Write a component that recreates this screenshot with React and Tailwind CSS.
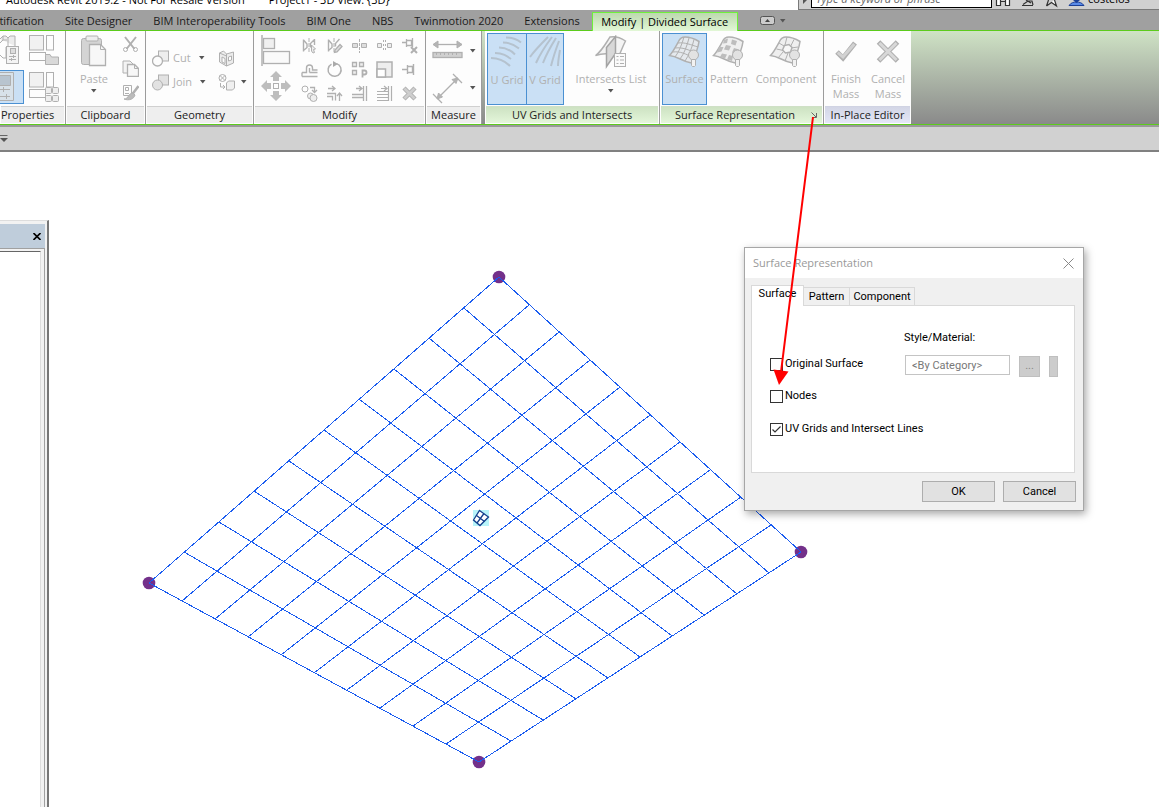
import React from "react";

const Caret = ({ className = "" }) => (
  <svg width="6" height="4" viewBox="0 0 6 4" className={className} aria-hidden="true">
    <path d="M0 0h5.500L2.750 3.500z" fill="#555" />
  </svg>
);

const Glyph = ({ w = 17, h = 17, children, className = "" }) => (
  <svg
    width={w}
    height={h}
    viewBox={`0 0 ${w} ${h}`}
    fill="none"
    stroke="#b0b0b0"
    strokeWidth="1"
    className={`shrink-0 ${className}`}
    aria-hidden="true"
  >
    {children}
  </svg>
);

const Tool = ({ label, className = "", children }) => (
  <button type="button" aria-label={label} className={`flex items-center justify-center ${className}`}>
    {children}
  </button>
);

const labelTones = {
  plain: "bg-[#eeeeee] border-[#d0d0d0]",
  green: "bg-linear-to-b from-[#cde2c2] to-[#e4f6da] border-[#cfe0c6]",
  blue: "bg-linear-to-b from-[#d3d6e6] to-[#e4e7f7] border-[#d0d3e3]",
};

function Panel({ title, width, tone = "plain", launcher, last, align = "justify-center", children }) {
  return (
    <section className={`flex shrink-0 flex-col bg-[#fdfdfd] ${width} ${last ? "" : "border-r border-[#9c9c9c]"}`}>
      <div className="flex h-[75px]">{children}</div>
      <div className={`mx-px flex h-[17px] items-center border-t text-[#222] ${align} ${labelTones[tone]}`}>
        <span className="whitespace-nowrap">{title}</span>
        {launcher && (
          <button type="button" aria-label={`${title} options`} className="ml-4">
            <svg width="7" height="7" viewBox="0 0 7 7" stroke="#666" fill="none" aria-hidden="true">
              <path d="M0.500 0.500L5 5M5.500 1v4.500H1" />
            </svg>
          </button>
        )}
      </div>
    </section>
  );
}

const PageCard = ({ x, y }) => (
  <g transform={`translate(${x} ${y})`}>
    <rect x="0.5" y="0.5" width="12" height="17" fill="#f4f4f4" />
    <rect x="4.500" y="2.500" width="5" height="5" fill="#ddd" />
    <path d="M3 10.500h7M3 13.500h7M7.500 9v3M5.500 12v3" />
  </g>
);

const SurfacePatch = ({ kind }) => (
  <Glyph w={34} h={34}>
    <path
      d="M1.500 20.500C5 17 8 11 10.500 6.500C12 3 14 2 17 2C22 2 27 4 31 6.500C30 14 27 21 23.500 28C18 27 15 25.500 11 23.500C8 22 5 21 1.500 20.500z"
      fill="#ebebeb"
      fillOpacity="0.8"
      strokeWidth="1.500"
    />
    {kind === "surface" && (
      <path d="M16 2C14 9 11 17 7 22M21 3C19 11 16 19 12 24M26 4.500C24 13 21 20 17 26M10 8C17 7 23 10 30 12M7.500 13C14 12 21 15 28 18M5 17C12 16 18 19 26 23" />
    )}
    {kind === "pattern" && (
      <g fill="#bdbdbd" stroke="none">
        <path d="M12 5l4-1.500-1 4.500-4 0.500zM20 4.500l5 1.500-1.500 4.500-4.500-1.500zM14 10l5 1-2 4.500-5-1zM22 13l5 1.500-2 4.500-5-1.500zM7 12l4.500 0-2 4.500-4.500 1zM10 18.500l5 1-2 4-5-1.500zM17 20l4 1-1 5-5-1.500z" />
      </g>
    )}
    {kind === "component" && (
      <>
        <path d="M18 2l-2 8M25 4.500l-4 8M10 8l5 3M29 12l-7 1M7.500 14l7 1.500M27 19l-7-2M14 17l-5 6M19 18l-3 8" />
        <path d="M15.500 10.500l4.500-1 3 3-1.500 4.500-5 1-3-3z" fill="#f8f8f8" strokeWidth="1.500" />
      </>
    )}
    <circle cx="25.500" cy="20" r="5" fill="#e2e2e2" />
    <path d="M23.500 24.500h4v6l-1 1h-2l-1-1z" fill="#f2f2f2" />
  </Glyph>
);

const IntersectIcon = () => (
  <Glyph w={34} h={34}>
    <path d="M1.500 20.500C8 16 12 8 16 2C21 1 27 3 31.500 6C29 11 27 16 24.500 22C17 18 9 18 1.500 20.500z" fill="#f4f4f4" strokeWidth="1.500" />
    <path d="M12.500 12.500L21.500 1.500V18.500L12.500 31.500z" fill="#d8d8d8" strokeWidth="1.500" stroke="#a4a4a4" />
    <rect x="20.500" y="18.500" width="11" height="13" fill="#fafafa" />
    <path d="M22.500 21.500h2M26 21.500h4M22.500 25h2M26 25h4M22.500 28.500h2M26 28.500h4" />
  </Glyph>
);

const Pane = ({ folder }) => (
  <Glyph w={31} h={31}>
    <rect x="0.5" y="0.5" width="14" height="14.500" fill="#f1f1f1" />
    <rect x="17.500" y="0.5" width="7" height="14.500" fill="#fdfdfd" />
    <rect x="0.5" y="17.500" width="16" height="8" fill="#fdfdfd" />
    {folder ? (
      <path d="M16.500 20.500v9h13v-7.500h-7l-1.500-2.500h-4.500z" fill="#d9d9d9" />
    ) : (
      <>
        <rect x="16.500" y="15.500" width="6" height="6" rx="1" fill="#eee" />
        <rect x="23.500" y="15.500" width="6" height="6" rx="1" fill="#eee" />
        <rect x="16.500" y="23.500" width="6" height="6" rx="1" fill="#eee" />
        <rect x="23.500" y="23.500" width="6" height="6" rx="1" fill="#eee" />
      </>
    )}
  </Glyph>
);

const modifyTools = [
  ["Mirror - Pick Axis", <><path d="M2.500 2.500v12M2.500 3l3.500 4v3.500l-3.500 3M13.500 2v6M13.500 2.500l-4 4v4" strokeWidth="1.400" /><path d="M8 1v15" strokeDasharray="4 1" /><path d="M10.500 8l4 4-2 0.500 1 3-1.500 0.500-1.500-2z" fill="#eee" /></>],
  ["Mirror - Draw Axis", <><path d="M2.500 2.500v12M2.500 3l3.500 4v3.500l-3.500 3M13.500 2l-4 4.500v3" strokeWidth="1.400" /><path d="M8 1v15" strokeDasharray="4 1" /><path d="M14 7.500l2 2-5 5.500-2.500 0.500 0.500-2.500z" fill="#ddd" strokeWidth="1.300" /></>],
  ["Split Element", <><path d="M1.500 6.500h5v4h-5zM10.500 6.500h5v4h-5z" fill="#ddd" /><path d="M8.500 2v14" strokeDasharray="3 1" /></>],
  ["Split with Gap", <><path d="M1.500 6.500h4v4h-4zM11.500 6.500h4v4h-4z" fill="#eee" /><path d="M7.500 3v11M9.500 3v11" strokeDasharray="2 2" /></>],
  ["Unpin", <><path d="M1 5.500h4M5.500 2v8M5.500 3.500h5v5h-5M11.500 1v9" strokeWidth="1.300" /><path d="M10 10l6 6M16 10l-6 6" strokeWidth="2" /></>],
  ["Offset", <path d="M1 11.500h4.500V7a3 3 0 0 1 6 0v2h5M1 15.500h15.500M1 11.500v4M8.500 11.500h8M8.500 7v4.500" strokeWidth="1.400" />],
  ["Rotate", <><path d="M10.500 2.600a6.500 6.500 0 1 1 -5 0.500" strokeWidth="1.500" /><path d="M7 0l5 3-5 3z" fill="#aaa" stroke="none" /></>],
  ["Array", <><path d="M1.500 1.500h4v4h-4zM8.500 1.500h4v4h-4zM1.500 9.500h4v4h-4z" fill="#eee" strokeWidth="1.300" /><path d="M11.500 16.500V9.500h2a2 2 0 0 1 0 4h-2" strokeWidth="1.800" /></>],
  ["Scale", <><rect x="1" y="1" width="15" height="15" fill="#eee" strokeWidth="1.500" /><rect x="1" y="8" width="8.500" height="8" fill="#fff" strokeWidth="1.500" /></>],
  ["Pin", <path d="M1 8.500h5M6.500 4v9M6.500 5.500h5v6h-5M12.500 3v11" strokeWidth="1.400" />],
  ["Copy", <><circle cx="4" cy="4" r="3" /><path d="M9 2.500h4.500v4M11 5l2.500 2.500L16 5" strokeWidth="1.300" /><circle cx="9.500" cy="11" r="3" fill="#eee" /><circle cx="12.500" cy="13" r="3.500" fill="#eee" /></>],
  ["Trim to Corner", <path d="M2 3.500h7M6 1l3 2.500L6 6M1 8.500h8.500v7M1 11.500h5.500v4M13.500 16V9M11 11l2.500-3 2.500 3" strokeWidth="1.300" />],
  ["Trim Single", <path d="M5 3.500h6M8 1l3 2.500L8 6M12.500 1v15M15.500 1v15M1 9.500h11M1 12.500h11" strokeWidth="1.300" />],
  ["Trim Multiple", <path d="M5 3.500h6M8 1l3 2.500L8 6M12.500 1v15M15.500 1v15M1 6.500h11M1 9.500h11M1 12.500h11M1 15.500h11" strokeWidth="1.200" />],
  ["Delete", <><path d="M3 3l11 11M14 3L3 14" strokeWidth="4.500" /><path d="M3.500 3.500l10 10M13.500 3.500l-10 10" strokeWidth="2.500" stroke="#cecece" /></>],
];

const GridCurves = () => (
  <Glyph w={32} h={32}>
    <g stroke="#b5c2ce" strokeWidth="2">
      <path d="M15 1.500c6 0 11 2 15 5M12 6.500c7 0 11 2 16 6M8 11.500c8 0 12 3 16 7M4 17c8 0 12 3 16 6M0 22c8 0 14 3 19 8" />
    </g>
  </Glyph>
);

const GridRays = () => (
  <Glyph w={32} h={32}>
    <g stroke="#b5c2ce" strokeWidth="2">
      <path d="M19 1C13 7 6 14 1 21M23 1C17 9 11 18 7 27M27 2C22 10 17 19 14 27M30 5C27 13 24 22 22 30M31 14c-1 6-2 11-2 16" />
    </g>
  </Glyph>
);

const bigTool = "flex flex-col items-center pt-1 text-[#b0b0b0]";
const bigActive = "border border-[#4a90d2] bg-[#cae0f5]";

function Ribbon() {
  return (
    <div className="flex h-[94px] overflow-hidden border-b border-[#5ccb1c] bg-linear-to-b from-[#cfe3c5] to-[#8a8a8a] leading-4">
      <Panel title="Properties" width="w-[66px]" align="justify-start">
        <div className="flex flex-col">
          <Tool label="Type Properties" className="mt-0.5 h-9 w-6 justify-start!">
            <Glyph w={20} h={32}>
              <path d="M0 4l3-3h3l2 2 2-2h5v10M3 1v4L0 8M8 3v8M3 5h4" fill="#ececec" />
              <path d="M0 20l3 3h3V12" />
              <PageCard x={6} y={11} />
            </Glyph>
          </Tool>
          <Tool label="Properties" className="mt-px h-[34px] w-6 border border-l-0 border-[#4a90d2] bg-[#cae0f5] justify-start!">
            <Glyph w={16} h={30}>
              <path d="M0 0.500h13.500v28H0" fill="#d8e2ea" />
              <path d="M0 3.500h10.500v10H0" fill="#b8c4cf" />
              <path d="M0 17.500h10M3.500 15v5M0 24.500h10M6.500 22v5" />
            </Glyph>
          </Tool>
        </div>
        <div className="ml-[5px] flex flex-col gap-1.5 pt-1">
          <Tool label="Family Category"><Pane folder /></Tool>
          <Tool label="Family Types"><Pane /></Tool>
        </div>
      </Panel>
      <Panel title="Clipboard" width="w-20">
        <button type="button" className={`${bigTool} ml-2.5 w-9`}>
          <Glyph w={28} h={32}>
            <rect x="1.500" y="3.500" width="20" height="26" rx="2" fill="#d4d4d4" />
            <rect x="6" y="1" width="12" height="5" rx="1" fill="#eee" />
            <path d="M9.500 9.500h11l5 5v16h-16z" fill="#f7f7f7" strokeWidth="1.300" />
            <path d="M20.500 9.500v5h5" />
          </Glyph>
          <span className="mt-1">Paste</span>
          <Caret className="mt-0.5" />
        </button>
        <div className="ml-2.5 flex flex-col gap-[7px] pt-[5px]">
          <Tool label="Cut">
            <Glyph><path d="M3 1l9.500 12M14 1L4.500 13" strokeWidth="2" /><circle cx="3.500" cy="13.500" r="2" /><circle cx="13.500" cy="13.500" r="2" /></Glyph>
          </Tool>
          <Tool label="Copy">
            <Glyph><path d="M1 1h7l3 3v9H1z" fill="#f3f3f3" /><path d="M5.500 4.500h7l4 4v8h-11z" fill="#f7f7f7" strokeWidth="1.300" /><path d="M12.500 4.500v4h4" /></Glyph>
          </Tool>
          <Tool label="Match Type">
            <Glyph><path d="M1.500 1.500h8v10h-8zM3.500 3.500h3v3h-3zM3 9.500h4" /><path d="M16.500 2l-6 8" strokeWidth="2.500" /><path d="M11 9c-5 0-4 6-9 6 5 2 10 0 11-4z" fill="#bbb" /></Glyph>
          </Tool>
        </div>
      </Panel>
      <Panel title="Geometry" width="w-[108px]">
        <div className="ml-1.5 flex flex-col gap-2 pt-[19px] text-[#b0b0b0]">
          <button type="button" className="flex h-4 items-center">
            <Glyph><rect x="6.500" y="1" width="10" height="10" fill="#eee" /><circle cx="5.500" cy="11" r="5" fill="#fcfcfc" strokeWidth="1.300" /></Glyph>
            <span className="ml-1">Cut</span><Caret className="ml-2" />
          </button>
          <button type="button" className="flex h-4 items-center">
            <Glyph><rect x="6.500" y="1" width="10" height="10" fill="#e2e2e2" /><circle cx="5.500" cy="11" r="5" fill="#e2e2e2" /></Glyph>
            <span className="ml-1">Join</span><Caret className="ml-2" />
          </button>
        </div>
        <div className="ml-3 flex flex-col gap-2 pt-[19px]">
          <Tool label="Join Roof" className="h-4 justify-start!">
            <Glyph><path d="M1.500 3l4-2 3 3 7-2v11l-7 3-7-4zM8.500 4v12M1.500 3l7 3M4 7v5l3 1.500V8.500z" fill="#ececec" /><path d="M10.500 7l3-1v4l-3 1z" fill="#fff" /></Glyph>
          </Tool>
          <Tool label="Paint" className="h-4 justify-start!">
            <Glyph w={17}><circle cx="4.500" cy="4" r="3.500" /><path d="M2 1.500l5 5M7 1.500L2 6.500M2.500 9v4h4M5 11l2 2-2 2" /><path d="M8.500 9l2-2h6v7l-2 2h-6z" fill="#f0f0f0" /></Glyph>
            <Caret className="ml-1.5" />
          </Tool>
        </div>
      </Panel>
      <Panel title="Modify" width="w-[172px]">
        <div className="ml-[7px] flex flex-col gap-1 pt-1">
          <Tool label="Align">
            <Glyph w={30} h={32}>
              <path d="M1 0v31" strokeWidth="1.500" />
              <rect x="2.500" y="3.500" width="11" height="10" fill="#f0f0f0" strokeWidth="1.300" />
              <rect x="2.500" y="16.500" width="26" height="12" fill="#fafafa" strokeWidth="1.300" />
            </Glyph>
          </Tool>
          <Tool label="Move">
            <Glyph w={30} h={32}>
              <g fill="#bdbdbd" stroke="none">
                <path d="M15 0l6 6h-3v4h-6V6H9zM15 30l6-6h-3v-4h-6v4H9zM0 15l6-6v3h4v6H6v3zM30 15l-6-6v3h-4v6h4v3z" />
              </g>
              <rect x="12.500" y="12.500" width="5" height="5" />
            </Glyph>
          </Tool>
        </div>
        <div className="ml-2.5 grid grid-cols-5 content-start gap-x-2 gap-y-[7px] pt-1.5">
          {modifyTools.map(([label, art]) => (
            <Tool key={label} label={label}><Glyph>{art}</Glyph></Tool>
          ))}
        </div>
      </Panel>
      <Panel title="Measure" width="w-14">
        <div className="ml-1.5 flex flex-col gap-1 pt-1">
          <Tool label="Measure" className="h-8 gap-[7px]">
            <Glyph w={31} h={22}>
              <path d="M2 4.500h28" strokeWidth="1.300" /><path d="M6 1L1 4.500 6 8zM25 1l5 3.500L25 8z" fill="#b4b4b4" />
              <rect x="1" y="12.500" width="29" height="5" fill="#d0d0d0" strokeWidth="1.300" /><path d="M4.500 13v2M8.500 13v2M12.500 13v2M16.500 13v2M20.500 13v2M24.500 13v2" />
            </Glyph>
            <Caret />
          </Tool>
          <Tool label="Aligned Dimension" className="h-9 gap-[7px]">
            <Glyph w={31} h={31}><path d="M1 21l9 9M21 1l9 9M6 25L26 5" strokeWidth="1.300" /><path d="M5 26l1.500-6 4 4zM26 5l-6 1.500 4 4z" fill="#b4b4b4" /></Glyph>
            <Caret />
          </Tool>
        </div>
      </Panel>
      <div className="w-[3px] shrink-0" />
      <Panel title="UV Grids and Intersects" width="w-[175px]" tone="green">
        <button type="button" className={`${bigTool} ${bigActive} ml-[2px] mt-0.5 h-[72px] w-10 pt-0.5!`}>
          <GridCurves /><span className="mt-1 whitespace-nowrap">U Grid</span>
        </button>
        <button type="button" className={`${bigTool} ${bigActive} -ml-px mt-0.5 h-[72px] w-[38px] pt-0.5!`}>
          <GridRays /><span className="mt-1 whitespace-nowrap">V Grid</span>
        </button>
        <button type="button" className={`${bigTool} ml-2.5 w-[74px]`}>
          <IntersectIcon /><span className="mt-0.5 whitespace-nowrap">Intersects List</span><Caret className="mt-0.5" />
        </button>
      </Panel>
      <Panel title="Surface Representation" width="w-[164px]" tone="green" launcher align="justify-end pr-1">
        <button type="button" className={`${bigTool} ${bigActive} ml-[2px] mt-0.5 h-[72px] w-[45px] pt-px!`}>
          <SurfacePatch kind="surface" /><span className="mt-0.5">Surface</span>
        </button>
        <button type="button" className={`${bigTool} ml-0.5 w-10`}>
          <SurfacePatch kind="pattern" /><span className="mt-0.5">Pattern</span>
        </button>
        <button type="button" className={`${bigTool} ml-1 w-[66px]`}>
          <SurfacePatch kind="component" /><span className="mt-0.5">Component</span>
        </button>
      </Panel>
      <Panel title="In-Place Editor" width="w-[87px]" tone="blue" last>
        <button type="button" className={`${bigTool} ml-1 w-9`}>
          <Glyph w={24} h={34}><path d="M3 17l6 6L21 8" strokeWidth="5" stroke="#b0b0b0" /><path d="M3.700 17.700l5.300 4.300L20.300 9" strokeWidth="3" stroke="#d2d2d2" /></Glyph>
          <span className="mt-0.5 leading-[15px]">Finish Mass</span>
        </button>
        <button type="button" className={`${bigTool} ml-1 w-10`}>
          <Glyph w={24} h={34}><path d="M2.500 7l19 19M21.500 7l-19 19" strokeWidth="5" /><path d="M3.500 8l17 17M20.500 8l-17 17" strokeWidth="3" stroke="#d8d8d8" /></Glyph>
          <span className="mt-0.5 leading-[15px]">Cancel Mass</span>
        </button>
      </Panel>
    </div>
  );
}

const CORNERS = { left: [149, 431], top: [499, 125], right: [801, 400], bottom: [479, 610] };
const between = (a, b, t) => [Math.round(a[0] + (b[0] - a[0]) * t), Math.round(a[1] + (b[1] - a[1]) * t)];

function DividedSurface() {
  const { left, top, right, bottom } = CORNERS;
  const lines = [];
  for (let i = 0; i <= 10; i++) {
    lines.push([between(left, top, i / 10), between(bottom, right, i / 10)]);
    lines.push([between(left, bottom, i / 10), between(top, right, i / 10)]);
  }
  return (
    <svg className="absolute inset-0 h-full w-full" role="img" aria-label="Divided surface in 3D view">
      {Object.values(CORNERS).map(([x, y]) => (
        <circle key={x} cx={x} cy={y} r="6.300" fill="#73308a" />
      ))}
      <g stroke="#1a5cf0" strokeWidth="1" shapeRendering="crispEdges">
        {lines.map(([a, b], i) => (
          <line key={i} x1={a[0]} y1={a[1]} x2={b[0]} y2={b[1]} />
        ))}
      </g>
      <rect x="473" y="358" width="16" height="16" fill="#b8f4fa" />
      <path d="M479.500 358.500L488.500 365L480 373.500L473.500 368z" fill="#fff" stroke="#123f8c" strokeWidth="1.300" />
      <path d="M484 361.500L477 371M476.500 363.500l8 6" stroke="#123f8c" strokeWidth="1.300" />
    </svg>
  );
}

function Check({ id, label, defaultChecked }) {
  return (
    <div className="flex h-4 items-center gap-0.5">
      <span className="relative flex">
        <input id={id} type="checkbox" defaultChecked={defaultChecked} className="peer h-[13px] w-[13px] appearance-none border border-[#333] bg-white" />
        <svg className="pointer-events-none absolute inset-0 hidden peer-checked:block" width="13" height="13" viewBox="0 0 13 13" fill="none" stroke="#333" strokeWidth="1.200" aria-hidden="true">
          <path d="M2.500 6.500L5 9l5.500-5.500" />
        </svg>
      </span>
      <label htmlFor={id} className="whitespace-nowrap">{label}</label>
    </div>
  );
}

function SurfaceDialog() {
  return (
    <div role="dialog" aria-labelledby="dlg-title" className="absolute left-[744px] top-[95px] flex w-[340px] flex-col border border-[#a6a6a6] bg-[#f0f0f0] font-[Roboto,sans-serif] text-[11px] leading-4 text-black shadow-[2px_3px_8px_rgba(0,0,0,0.35)]">
      <header className="flex h-[30px] items-center justify-between bg-white px-2 text-[#999]">
        <h2 id="dlg-title" className="font-['Open_Sans',sans-serif]">Surface Representation</h2>
        <button type="button" aria-label="Close" className="mr-px">
          <svg width="11" height="11" viewBox="0 0 11 11" stroke="#888" aria-hidden="true"><path d="M0.500 0.500l10 10M10.500 0.500l-10 10" /></svg>
        </button>
      </header>
      <div className="flex flex-col pl-1.5 pr-2 pt-[7px]">
        <div role="tablist" className="flex items-end">
          <button type="button" role="tab" aria-selected="true" className="relative -mb-px h-[21px] w-[53px] border border-b-0 border-[#d9d9d9] bg-white pb-1">Surface</button>
          <button type="button" role="tab" aria-selected="false" className="h-[18px] w-[46px] border border-b-0 border-l-0 border-[#d9d9d9]">Pattern</button>
          <button type="button" role="tab" aria-selected="false" className="h-[18px] w-[65px] border border-b-0 border-l-0 border-[#d9d9d9]">Component</button>
        </div>
        <div role="tabpanel" className="h-[168px] border border-[#d9d9d9] bg-white pl-[18px] pt-6">
          <label htmlFor="material" className="ml-[134px] block">Style/Material:</label>
          <div className="mt-[9px] flex h-[22px] items-center">
            <div className="-mt-1 w-[135px]"><Check id="orig" label="Original Surface" /></div>
            <input id="material" readOnly defaultValue="<By Category>" className="-mt-0.5 h-5 w-[105px] border border-[#c4c4c4] bg-white px-1.5 text-[#777]" />
            <button type="button" aria-label="Browse material" className="ml-[9px] h-[21px] w-[21px] border border-[#bfbfbf] bg-[#cccccc] text-[#888]">...</button>
            <button type="button" aria-label="More" className="ml-[9px] h-[21px] w-[9px] border border-[#bfbfbf] bg-[#cccccc]" />
          </div>
          <div className="mt-[11px]"><Check id="nodes" label="Nodes" /></div>
          <div className="mt-[17px]"><Check id="uv" label="UV Grids and Intersect Lines" defaultChecked /></div>
        </div>
      </div>
      <footer className="flex justify-end gap-2 px-[7px] py-2">
        <button type="button" className="h-[21px] w-[73px] border border-[#adadad] bg-[#e1e1e1]">OK</button>
        <button type="button" className="h-[21px] w-[73px] border border-[#adadad] bg-[#e1e1e1]">Cancel</button>
      </footer>
    </div>
  );
}

const tabs = ["Site Designer", "BIM Interoperability Tools", "BIM One", "NBS", "Twinmotion 2020", "Extensions"];

export default function App() {
  return (
    <div className="relative flex min-h-screen flex-col overflow-hidden bg-white font-['Open_Sans','Noto_Sans',sans-serif] text-[11px] leading-4 text-[#1a1a1a]">
      <header className="flex h-2.5 items-end overflow-hidden text-black">
        <div className="flex flex-1 gap-6 whitespace-nowrap pb-[2px] pl-1.5">
          <span>Autodesk Revit 2019.2 - Not For Resale Version</span>
          <span>Project1 - 3D View: {"{3D}"}</span>
        </div>
        <div className="flex h-2.5 w-[361px] items-end border-b border-l border-[#7a7a7a] bg-[#d0d0d0]">
          <svg width="12" height="9" className="shrink-0" aria-hidden="true"><path d="M4 0h4L4 4z" fill="#555" /></svg>
          <div className="mb-px flex h-2 w-[181px] items-end overflow-hidden border-x border-b border-black bg-white px-1">
            <input aria-label="Search" placeholder="Type a keyword or phrase" className="h-4 w-full shrink-0 italic placeholder:text-[#666]" />
          </div>
          <svg width="96" height="9" className="shrink-0" fill="none" stroke="#333" aria-hidden="true">
            <path d="M4.500 0v5.500h4V0M13.500 0v5.500h4V0M8.500 1.500h5" fill="#fff" strokeWidth="1.200" />
            <path d="M30 5.500h11M31 4.500l5-3.500h4l1 4M34 0l5 3" strokeWidth="1.200" />
            <path d="M54.500 6l2-6M54.500 6l5-3.500 5 3.500-2-6" fill="#fff" strokeWidth="1.200" />
            <path d="M77 5.500c2-3 5-3.500 7.500-3.500s5.500 0.500 7.500 3.500z" fill="#5a8be8" stroke="#1c3f96" />
            <path d="M81 0h7l-3.500 3z" fill="#1c3f96" stroke="none" />
          </svg>
          <span className="pb-0.5">costelos</span>
        </div>
      </header>
      <nav className="flex h-[21px] items-end border-b border-[#5ccb1c] bg-[#a0a0a0]">
        <div className="flex h-[19px] items-center gap-[21px] whitespace-nowrap">
          <a href="#identification" className="flex w-11 justify-end overflow-hidden">Identification</a>
          {tabs.map((t) => (
            <a key={t} href="#tab">{t}</a>
          ))}
        </div>
        <a href="#modify" className="relative -mb-px ml-3 flex h-[19px] w-[146px] items-center justify-center whitespace-nowrap border border-b-0 border-[#6ff03a] bg-linear-to-b from-[#bcd9ae] to-[#e2f7d6] text-black">Modify | Divided Surface</a>
        <button type="button" aria-label="Minimize ribbon" className="mb-[5px] ml-[22px] flex items-center gap-1">
          <svg width="16" height="9" viewBox="0 0 16 9" aria-hidden="true">
            <rect x="0.500" y="0.500" width="14" height="8" rx="2" fill="#ccc" stroke="#555" />
            <path d="M5 6l2.500-3L10 6z" fill="#444" />
          </svg>
          <Caret />
        </button>
      </nav>
      <Ribbon />
      <div className="flex h-[27px] items-center border-b-2 border-t-2 border-b-[#808080] border-t-[#999] bg-[#d1d1d1]">
        <button type="button" aria-label="Options bar menu">
          <svg width="8" height="8" viewBox="0 0 8 8" aria-hidden="true"><path d="M0 0.500h7.500" stroke="#666" /><path d="M0 3h8L4 7z" fill="#555" /></svg>
        </button>
      </div>
      <main className="relative flex flex-1">
        <aside className="mt-[68px] flex w-[49px] flex-col border-r-2 border-t border-r-[#777] border-t-[#ddd] bg-[#f2f2f2] pr-0.5 pt-[3px]">
          <div className="flex h-6 items-center justify-end bg-[#bfcddb] pr-1">
            <button type="button" aria-label="Close palette">
              <svg width="8" height="7" viewBox="0 0 8 7" stroke="#000" strokeWidth="1.600" aria-hidden="true"><path d="M0.500 0l7 7M7.500 0l-7 7" /></svg>
            </button>
          </div>
          <div className="flex flex-1 border-r border-t border-[#a0a0a0] pr-[3px] pt-0.5">
            <div className="flex-1 border-r border-t border-r-[#ddd] border-t-[#666] bg-white" />
          </div>
        </aside>
        <DividedSurface />
        <SurfaceDialog />
      </main>
      <svg className="pointer-events-none absolute inset-0 h-full w-full" aria-hidden="true">
        <path d="M813 117L781 372" stroke="#f00" strokeWidth="2" />
        <path d="M773.500 369.500l15 2L779 385z" fill="#f00" />
      </svg>
    </div>
  );
}
